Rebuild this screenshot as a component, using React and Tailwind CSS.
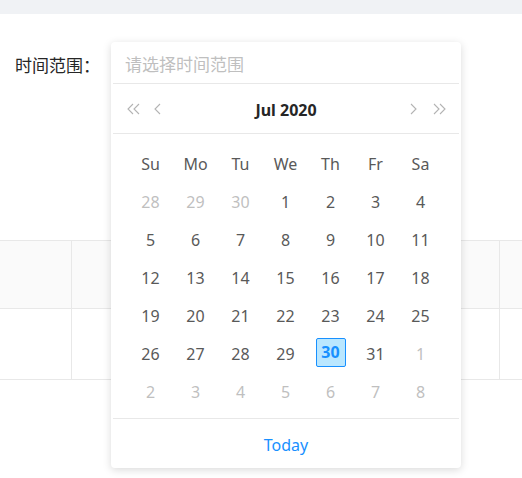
import React from "react";

const days = [
  [28, 29, 30, 1, 2, 3, 4],
  [5, 6, 7, 8, 9, 10, 11],
  [12, 13, 14, 15, 16, 17, 18],
  [19, 20, 21, 22, 23, 24, 25],
  [26, 27, 28, 29, 30, 31, 1],
  [2, 3, 4, 5, 6, 7, 8],
];
const weekdays = ["Su", "Mo", "Tu", "We", "Th", "Fr", "Sa"];

function Chevron({ dir = "left", double = false }) {
  const pts = dir === "left" ? "6,1 1,6 6,11" : "1,1 6,6 1,11";
  return (
    <svg width={double ? 14 : 7} height="12" viewBox={double ? "0 0 14 12" : "0 0 7 12"} fill="none" stroke="#b3b3b3" strokeWidth="1.1">
      <polyline points={pts} />
      {double && <polyline points={pts} transform="translate(6 0)" />}
    </svg>
  );
}

function Calendar() {
  return (
    <div className="absolute left-[111px] top-[42px] w-[350px] h-[426px] bg-white rounded-[4px] shadow-[0_2px_8px_rgba(0,0,0,0.15)] flex flex-col">
      <div className="h-[42px] mx-[2px] border-b border-[#e8e8e8] flex items-center pl-[12px] pt-[4px] text-[17px] text-[#bfbfbf]">
        请选择时间范围
      </div>
      <div className="h-[50px] mx-[2px] border-b border-[#e8e8e8] flex items-center relative">
        <div className="absolute left-[14px] top-[19px] flex items-center gap-[13px]">
          <Chevron dir="left" double />
          <Chevron dir="left" />
        </div>
        <div className="flex-1 text-center pt-[2px] text-[16px] font-bold text-[#262626]">Jul 2020</div>
        <div className="absolute left-[297px] top-[19px] flex items-center gap-[16px]">
          <Chevron dir="right" />
          <Chevron dir="right" double />
        </div>
      </div>
      <div className="pl-[15px] pt-[10px] pb-[7px] mx-[2px] border-b border-[#e8e8e8]">
        <div className="w-[315px] grid grid-cols-7 h-[39px] items-center text-center text-[16px] text-[#595959]">
          {weekdays.map((w) => (
            <div key={w}>{w}</div>
          ))}
        </div>
        {days.map((row, r) => (
          <div key={r} className="w-[315px] grid grid-cols-7 h-[38px] items-center text-center text-[16px]">
            {row.map((d, c) => {
              const other = (r === 0 && d > 20) || (r >= 4 && d < 10);
              const selected = r === 4 && d === 30;
              if (selected) {
                return (
                  <div key={c} className="flex justify-center">
                    <span className="w-[30px] h-[29px] -mt-[4px] flex items-center justify-center rounded-[2px] bg-[#bae7ff] border border-[#1890ff] text-[#1890ff] font-bold">
                      {d}
                    </span>
                  </div>
                );
              }
              return (
                <div key={c} className={other ? "text-[#bfbfbf]" : "text-[#595959]"}>
                  {d}
                </div>
              );
            })}
          </div>
        ))}
      </div>
      <div className="flex-1 flex items-center justify-center pt-[3px] text-[16px] text-[#1890ff]">Today</div>
    </div>
  );
}

export default function App() {
  return (
    <div
      className="relative w-[522px] h-[478px] bg-white overflow-hidden"
      style={{ fontFamily: '"Noto Sans", "Noto Sans CJK SC", sans-serif' }}
    >
      <div className="h-[14px] bg-[#f0f2f5]" />
      <div className="mt-[30px] h-[44px] flex items-center pl-[15px] text-[17px] text-[#262626]">时间范围：</div>
      <div className="mt-[152px] border-t border-b border-[#e8e8e8]">
        <div className="grid grid-cols-[72px_1fr_22px] h-[68px] bg-[#fafafa] border-b border-[#e8e8e8]">
          <div className="border-r border-[#e8e8e8]" />
          <div className="border-r border-[#e8e8e8]" />
          <div />
        </div>
        <div className="grid grid-cols-[72px_1fr_22px] h-[70px]">
          <div className="border-r border-[#e8e8e8]" />
          <div className="border-r border-[#e8e8e8]" />
          <div />
        </div>
      </div>
      <Calendar />
    </div>
  );
}
